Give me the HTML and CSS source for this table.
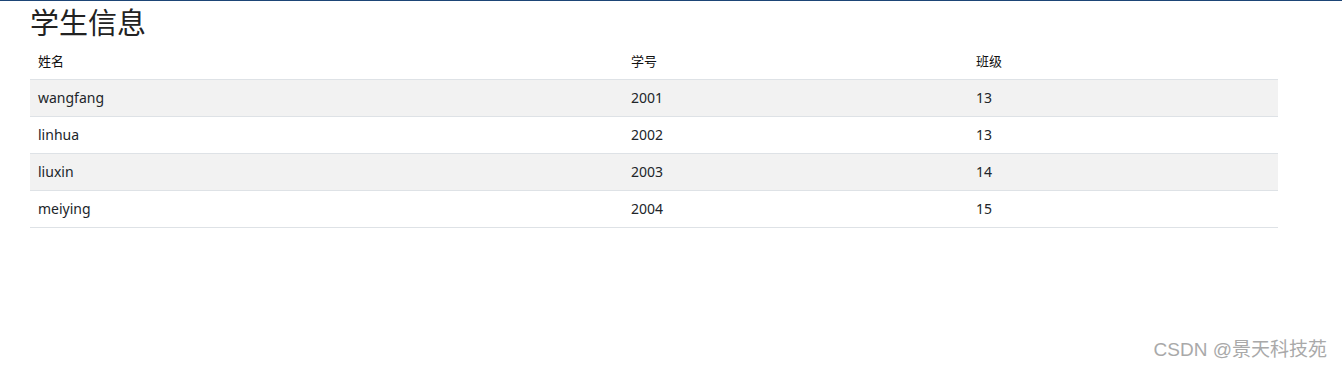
FILE: index.html
```html
<!DOCTYPE html>
<html lang="zh-CN">
<head>
<meta charset="utf-8">
<title>学生信息</title>
<link rel="stylesheet" href="styles.css">
</head>
<body>
<div class="topbar"></div>
<main class="page">
  <h1 class="title">学生信息</h1>
  <table class="grid">
    <colgroup>
      <col class="c1"><col class="c2"><col class="c3">
    </colgroup>
    <thead>
      <tr><th>姓名</th><th>学号</th><th>班级</th></tr>
    </thead>
    <tbody>
      <tr class="odd"><td>wangfang</td><td>2001</td><td>13</td></tr>
      <tr><td>linhua</td><td>2002</td><td>13</td></tr>
      <tr class="odd"><td>liuxin</td><td>2003</td><td>14</td></tr>
      <tr><td>meiying</td><td>2004</td><td>15</td></tr>
    </tbody>
  </table>
</main>
<div class="watermark">CSDN @景天科技苑</div>
</body>
</html>
```

FILE: styles.css
```css
html, body {
  margin: 0;
  padding: 0;
  background: #fff;
}
body {
  font-family: "Noto Sans", "Noto Sans CJK SC", sans-serif;
  color: #212529;
  width: 1342px;
  height: 370px;
  position: relative;
  overflow: hidden;
}
.topbar {
  height: 1px;
  background: #1d4576;
}
.page {
  padding-left: 30px;
  width: 1248px;
}
.title {
  margin: 0;
  font-family: "Noto Sans CJK SC", sans-serif;
  font-weight: 400;
  font-size: 29px;
  line-height: 40px;
  color: #222;
  height: 42px;
}
.grid {
  width: 1248px;
  border-collapse: collapse;
  table-layout: fixed;
  font-size: 14px;
}
.c1 { width: 593px; }
.c2 { width: 345px; }
.c3 { width: 310px; }
.grid th, .grid td {
  padding: 8px;
  line-height: 20px;
  text-align: left;
  vertical-align: middle;
}
.grid th {
  font-family: "Noto Sans CJK SC", sans-serif;
  font-weight: 400;
  font-size: 13px;
  color: #111;
}
.grid td {
  border-top: 1px solid #dee2e6;
}
.grid tbody tr:last-child td {
  border-bottom: 1px solid #dee2e6;
}
.grid tr.odd td {
  background: #f2f2f2;
}
.watermark {
  position: absolute;
  right: 15px;
  bottom: 8px;
  font-family: "Liberation Sans", "Noto Sans CJK SC", sans-serif;
  font-size: 19px;
  color: #a9a9a9;
  line-height: 24px;
}
```
